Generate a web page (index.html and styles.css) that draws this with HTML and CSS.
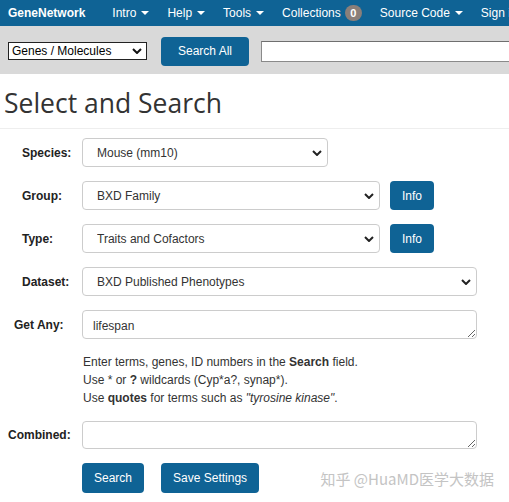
FILE: index.html
```html
<!DOCTYPE html>
<html lang="en">
<head>
<meta charset="utf-8">
<title>GeneNetwork - Select and Search</title>
<link rel="stylesheet" href="styles.css">
</head>
<body>
<nav class="navbar">
  <span class="brand">GeneNetwork</span>
  <span class="nav-item">Intro<span class="caret"></span></span>
  <span class="nav-item">Help<span class="caret"></span></span>
  <span class="nav-item">Tools<span class="caret"></span></span>
  <span class="nav-item">Collections<span class="badge">0</span></span>
  <span class="nav-item">Source Code<span class="caret"></span></span>
  <span class="nav-item">Sign in</span>
</nav>

<div class="searchbar">
  <div class="select-wrap sb-select">
    <select class="sb-native"><option>Genes / Molecules</option></select>
    <svg class="chev sb-chev" width="10" height="6" viewBox="0 0 10 6"><path d="M1 1 L5 5 L9 1" fill="none" stroke="#111" stroke-width="2"/></svg>
  </div>
  <button class="btn btn-searchall" type="button">Search All</button>
  <input class="sb-input" type="text">
</div>

<main class="content">
  <h1 class="title">Select and Search</h1>
  <hr class="rule">
  <form class="form-grid">
    <label class="lbl">Species:</label>
    <div class="ctl">
      <div class="select-wrap w-species">
        <select class="fsel"><option>Mouse (mm10)</option></select>
        <svg class="chev" width="10" height="6" viewBox="0 0 10 6"><path d="M1 1 L5 5 L9 1" fill="none" stroke="#222" stroke-width="2"/></svg>
      </div>
    </div>

    <label class="lbl">Group:</label>
    <div class="ctl">
      <div class="select-wrap w-mid">
        <select class="fsel"><option>BXD Family</option></select>
        <svg class="chev" width="10" height="6" viewBox="0 0 10 6"><path d="M1 1 L5 5 L9 1" fill="none" stroke="#222" stroke-width="2"/></svg>
      </div>
      <button class="btn btn-info" type="button">Info</button>
    </div>

    <label class="lbl">Type:</label>
    <div class="ctl">
      <div class="select-wrap w-mid">
        <select class="fsel"><option>Traits and Cofactors</option></select>
        <svg class="chev" width="10" height="6" viewBox="0 0 10 6"><path d="M1 1 L5 5 L9 1" fill="none" stroke="#222" stroke-width="2"/></svg>
      </div>
      <button class="btn btn-info" type="button">Info</button>
    </div>

    <label class="lbl">Dataset:</label>
    <div class="ctl">
      <div class="select-wrap w-wide">
        <select class="fsel"><option>BXD Published Phenotypes</option></select>
        <svg class="chev" width="10" height="6" viewBox="0 0 10 6"><path d="M1 1 L5 5 L9 1" fill="none" stroke="#222" stroke-width="2"/></svg>
      </div>
    </div>

    <label class="lbl lbl-getany">Get Any:</label>
    <div class="ctl">
      <textarea class="ta">lifespan</textarea>
    </div>

    <div class="help">
      <p>Enter terms, genes, ID numbers in the <b>Search</b> field.</p>
      <p>Use * or <b>?</b> wildcards (Cyp*a?, synap*).</p>
      <p>Use <b>quotes</b> for terms such as <i>"tyrosine kinase"</i>.</p>
    </div>

    <label class="lbl lbl-combined">Combined:</label>
    <div class="ctl">
      <textarea class="ta ta-combined"></textarea>
    </div>

    <div class="actions">
      <button class="btn btn-action" type="button">Search</button>
      <button class="btn btn-action" type="button">Save Settings</button>
      <span class="watermark">知乎 @HuaMD医学大数据</span>
    </div>
  </form>
</main>
</body>
</html>
```
FILE: styles.css
```css
html, body {
  margin: 0;
  padding: 0;
  background: #fff;
  overflow: hidden;
  font-family: "Liberation Sans", Arial, sans-serif;
  font-size: 12px;
  color: #333;
}

/* navbar */
.navbar {
  height: 26px;
  background: #0f6395;
  display: flex;
  align-items: center;
  padding-left: 8px;
  gap: 18px;
  white-space: nowrap;
  overflow: hidden;
  color: #fff;
  font-size: 12px;
}
.brand {
  font-weight: bold;
  margin-right: 9px;
}
.nav-item {
  display: inline-flex;
  align-items: center;
  flex-shrink: 0;
}
.caret {
  display: inline-block;
  width: 0;
  height: 0;
  margin-left: 5px;
  border-top: 4px solid #fff;
  border-left: 4px solid transparent;
  border-right: 4px solid transparent;
}
.badge {
  display: inline-flex;
  align-items: center;
  justify-content: center;
  margin-left: 4px;
  width: 17px;
  height: 16px;
  border-radius: 8px;
  background: #8a7f7a;
  font-weight: bold;
  font-size: 11px;
  color: #fff;
}

/* search bar */
.searchbar {
  height: 48px;
  background: #d9d9d9;
  display: flex;
  align-items: center;
  padding-left: 8px;
  white-space: nowrap;
  overflow: hidden;
}
.select-wrap {
  display: grid;
  flex-shrink: 0;
}
.select-wrap > select,
.select-wrap > .chev {
  grid-area: 1 / 1;
}
.chev {
  justify-self: end;
  align-self: center;
  margin-right: 6px;
  pointer-events: none;
}
.sb-select {
  width: 139px;
  margin-top: 1px;
}
.sb-native {
  appearance: none;
  -webkit-appearance: none;
  height: 18px;
  width: 100%;
  border: 1px solid #222;
  border-radius: 0;
  background: #fff;
  color: #000;
  font-family: "Liberation Sans", Arial, sans-serif;
  font-size: 12px;
  padding: 0 0 0 3px;
  margin: 0;
}
.sb-chev {
  margin-right: 5px;
}
.btn {
  background: #0f6395;
  color: #fff;
  border: none;
  border-radius: 4px;
  font-family: "Liberation Sans", Arial, sans-serif;
  font-size: 12px;
  cursor: pointer;
  margin: 0;
  flex-shrink: 0;
}
.btn-searchall {
  width: 88px;
  height: 29px;
  margin-left: 14px;
  margin-top: 2px;
}
.sb-input {
  margin-left: 12px;
  margin-top: 2px;
  width: 320px;
  height: 21px;
  box-sizing: border-box;
  border: 1px solid #8a8a8a;
  border-top-color: #6f6f6f;
  background: #fff;
  flex-shrink: 0;
}

/* main */
.content {
  padding: 0;
}
.title {
  font-family: "Open Sans", "Liberation Sans", sans-serif;
  font-weight: 400;
  font-size: 26.5px;
  line-height: normal;
  color: #333;
  margin: 11px 0 0 4px;
}
.rule {
  border: 0;
  border-top: 1px solid #eee;
  margin: 7px 0 9px 0;
}
.form-grid {
  display: grid;
  grid-template-columns: 74px 1fr;
  row-gap: 14px;
  margin: 0 0 0 8px;
}
.lbl {
  align-self: center;
  font-weight: bold;
  font-size: 12px;
  color: #222;
  padding-left: 14px;
}
.lbl-getany {
  padding-left: 6px;
}
.lbl-combined {
  padding-left: 0;
}
.ctl {
  display: flex;
  align-items: center;
  gap: 10px;
}
.fsel {
  appearance: none;
  -webkit-appearance: none;
  width: 100%;
  height: 29px;
  box-sizing: border-box;
  border: 1px solid #ccc;
  border-radius: 4px;
  background: #fff;
  color: #333;
  font-family: "Liberation Sans", Arial, sans-serif;
  font-size: 12px;
  padding: 0 24px 0 14px;
  margin: 0;
}
.w-species { width: 246px; }
.w-mid { width: 298px; }
.w-wide { width: 395px; }
.btn-info {
  width: 44px;
  height: 29px;
}
.ta {
  width: 395px;
  height: 29px;
  box-sizing: border-box;
  border: 1px solid #ccc;
  border-radius: 4px;
  padding: 8px 10px 0 10px;
  font-family: "Liberation Sans", Arial, sans-serif;
  font-size: 12px;
  line-height: 14px;
  color: #333;
  resize: vertical;
  margin: 0;
  display: block;
}
.ta-combined {
  height: 28px;
}
.help {
  grid-column: 2;
  font-size: 12px;
  line-height: 18px;
  color: #333;
  padding-left: 1px;
}
.help p {
  margin: 0;
}
.actions {
  grid-column: 2;
  display: flex;
  align-items: center;
  gap: 17px;
}
.btn-action {
  height: 30px;
  padding: 0 12px;
}
.watermark {
  margin-left: auto;
  margin-right: 15px;
  font-family: "Noto Sans CJK SC", "Liberation Sans", sans-serif;
  font-size: 15px;
  color: #c4c4c4;
  white-space: nowrap;
}
```
